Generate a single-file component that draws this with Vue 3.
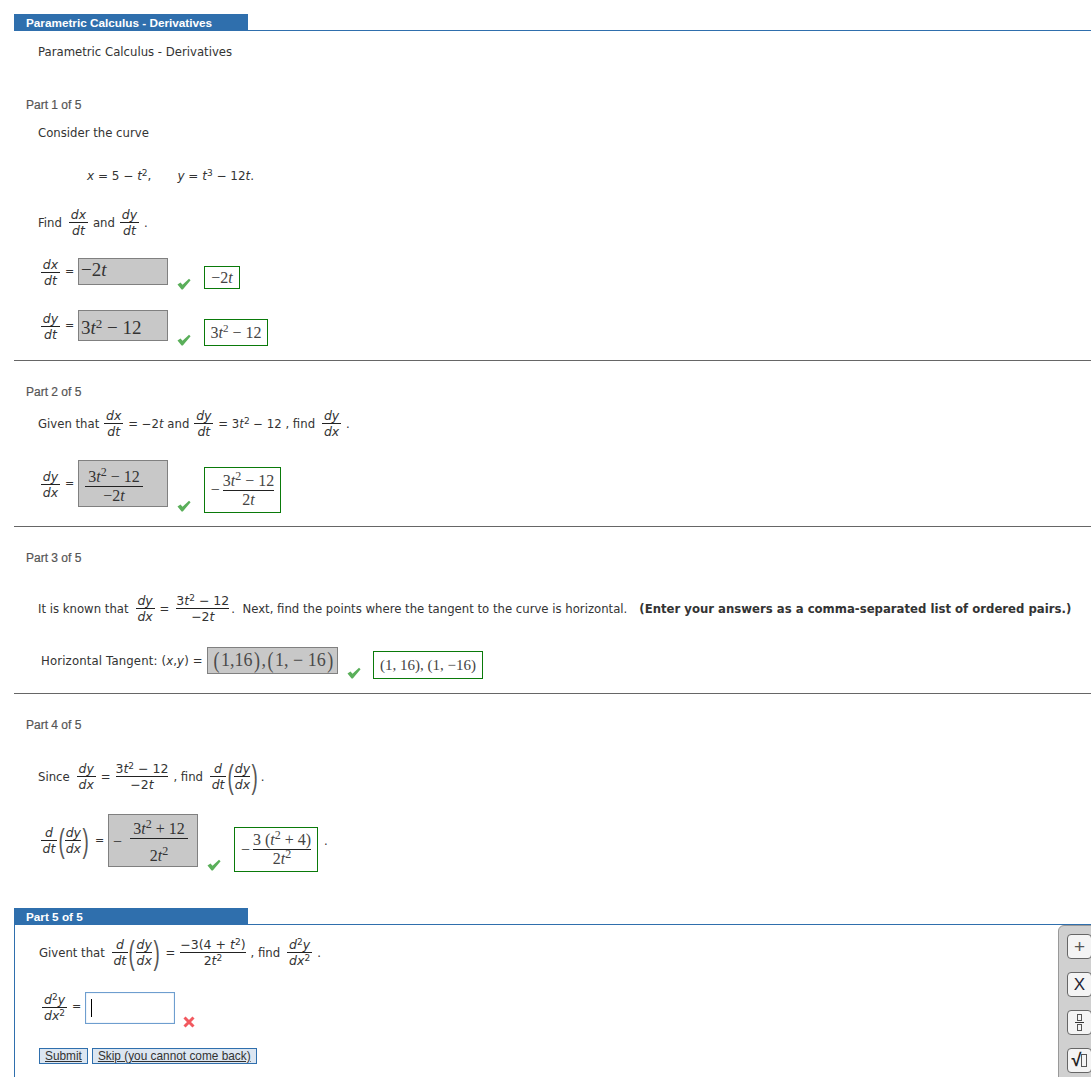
<template>
  <div class="page">
    <div class="banner"><span class="tab">Parametric Calculus - Derivatives</span></div>
    <p class="title">Parametric Calculus - Derivatives</p>

    <!-- part 1 -->
    <h4 class="part part-1">Part 1 of 5</h4>
    <p class="text consider">Consider the curve</p>
    <p class="text equation">
      <i>x</i> = 5 − <i>t</i><sup>2</sup>,<span class="eq-gap"></span><i>y</i> = <i>t</i><sup>3</sup> − 12<i>t</i>.
    </p>
    <div class="text line find-1">
      <span>Find</span>
      <span class="frac gap-before"><i>dx</i><i>dt</i></span>
      <span>and</span>
      <span class="frac"><i>dy</i><i>dt</i></span>
      <span>.</span>
    </div>
    <div class="answer a-1">
      <span class="frac"><i>dx</i><i>dt</i></span>
      <span class="eq">=</span>
      <div class="input math entry-1">−2<i>t</i></div>
      <svg class="mark check" viewBox="0 0 14 12"><path d="M0.5 6.5 L3.5 4.5 L5.5 6.8 L12 0.8 L13.6 2.2 L5.8 11.5 L4.6 11.5 Z" /></svg>
      <div class="solution math sol-1"><span>−2<i>t</i></span></div>
    </div>
    <div class="answer a-2">
      <span class="frac"><i>dy</i><i>dt</i></span>
      <span class="eq">=</span>
      <div class="input math entry-2">3<i>t</i><sup>2</sup> − 12</div>
      <svg class="mark check" viewBox="0 0 14 12"><path d="M0.5 6.5 L3.5 4.5 L5.5 6.8 L12 0.8 L13.6 2.2 L5.8 11.5 L4.6 11.5 Z" /></svg>
      <div class="solution math sol-2"><span>3<i>t</i><sup>2</sup> − 12</span></div>
    </div>
    <hr class="rule rule-1" />

    <!-- part 2 -->
    <h4 class="part">Part 2 of 5</h4>
    <div class="text line given">
      <span>Given that</span>
      <span class="frac"><i>dx</i><i>dt</i></span>
      <span>= −2<i>t</i> and</span>
      <span class="frac"><i>dy</i><i>dt</i></span>
      <span>= 3<i>t</i><sup>2</sup> − 12 , find</span>
      <span class="frac gap-before"><i>dy</i><i>dx</i></span>
      <span>.</span>
    </div>
    <div class="answer a-3">
      <span class="frac"><i>dy</i><i>dx</i></span>
      <span class="eq">=</span>
      <div class="input math entry-3">
        <span class="frac math-frac wide"><span>3<i>t</i><sup>2</sup> − 12</span><span>−2<i>t</i></span></span>
      </div>
      <svg class="mark check" viewBox="0 0 14 12"><path d="M0.5 6.5 L3.5 4.5 L5.5 6.8 L12 0.8 L13.6 2.2 L5.8 11.5 L4.6 11.5 Z" /></svg>
      <div class="solution math sol-3">
        <span class="minus">−</span>
        <span class="frac math-frac"><span>3<i>t</i><sup>2</sup> − 12</span><span>2<i>t</i></span></span>
      </div>
    </div>
    <hr class="rule rule-2" />

    <!-- part 3 -->
    <h4 class="part">Part 3 of 5</h4>
    <div class="text line known">
      <span>It is known that</span>
      <span class="frac gap-before"><i>dy</i><i>dx</i></span>
      <span>=</span>
      <span class="frac gap-before"><span>3<i>t</i><sup>2</sup> − 12</span><span>−2<i>t</i></span></span>
      <span class="tight">.&nbsp;&nbsp;Next, find the points where the tangent to the curve is horizontal.</span>
      <b class="hint">(Enter your answers as a comma-separated list of ordered pairs.)</b>
    </div>
    <div class="answer a-4">
      <span class="text tangent">Horizontal Tangent: (<i>x</i>,<i>y</i>) =</span>
      <div class="input math entry-4"><span class="big-paren">(</span>1,16<span class="big-paren">)</span>,<span class="big-paren">(</span>1, − 16<span class="big-paren">)</span></div>
      <svg class="mark check" viewBox="0 0 14 12"><path d="M0.5 6.5 L3.5 4.5 L5.5 6.8 L12 0.8 L13.6 2.2 L5.8 11.5 L4.6 11.5 Z" /></svg>
      <div class="solution math sol-4"><span>(1, 16), (1, −16)</span></div>
    </div>
    <hr class="rule rule-3" />

    <!-- part 4 -->
    <h4 class="part">Part 4 of 5</h4>
    <div class="text line since">
      <span>Since</span>
      <span class="frac gap-before"><i>dy</i><i>dx</i></span>
      <span>=</span>
      <span class="frac"><span>3<i>t</i><sup>2</sup> − 12</span><span>−2<i>t</i></span></span>
      <span>, find</span>
      <span class="deriv gap-before">
        <span class="frac"><i>d</i><i>dt</i></span><span class="paren">(</span><span class="frac"><i>dy</i><i>dx</i></span><span class="paren">)</span>
      </span>
      <span class="tight">.</span>
    </div>
    <div class="answer a-5">
      <span class="deriv">
        <span class="frac"><i>d</i><i>dt</i></span><span class="paren">(</span><span class="frac"><i>dy</i><i>dx</i></span><span class="paren">)</span>
      </span>
      <span class="eq">=</span>
      <div class="input math entry-5">
        <span class="minus">−</span>
        <span class="frac math-frac wide"><span>3<i>t</i><sup>2</sup> + 12</span><span class="tall">2<i>t</i><sup>2</sup></span></span>
      </div>
      <svg class="mark check" viewBox="0 0 14 12"><path d="M0.5 6.5 L3.5 4.5 L5.5 6.8 L12 0.8 L13.6 2.2 L5.8 11.5 L4.6 11.5 Z" /></svg>
      <div class="solution math sol-5">
        <span class="minus">−</span>
        <span class="frac math-frac wide"><span>3 (<i>t</i><sup>2</sup> + 4)</span><span>2<i>t</i><sup>2</sup></span></span>
      </div>
      <span class="text stop">.</span>
    </div>

    <!-- part 5, the open one -->
    <div class="banner banner-5"><span class="tab">Part 5 of 5</span></div>
    <section class="current">
      <div class="text line givent">
        <span>Givent that</span>
        <span class="deriv gap-before">
          <span class="frac"><i>d</i><i>dt</i></span><span class="paren">(</span><span class="frac"><i>dy</i><i>dx</i></span><span class="paren">)</span>
        </span>
        <span>=</span>
        <span class="frac"><span>−3(4 + <i>t</i><sup>2</sup>)</span><span>2<i>t</i><sup>2</sup></span></span>
        <span>, find</span>
        <span class="frac second gap-before"><span><i>d</i><sup>2</sup><i>y</i></span><span><i>dx</i><sup>2</sup></span></span>
        <span>.</span>
      </div>
      <div class="answer a-6">
        <span class="frac second"><span><i>d</i><sup>2</sup><i>y</i></span><span><i>dx</i><sup>2</sup></span></span>
        <span class="eq">=</span>
        <div class="entry-6"><span class="caret"></span></div>
        <svg class="mark cross" viewBox="0 0 12 12"><path d="M1.5 1.5 L10.5 10.5 M10.5 1.5 L1.5 10.5" /></svg>
      </div>
      <div class="buttons">
        <button class="btn" type="button">Submit</button>
        <button class="btn" type="button">Skip (you cannot come back)</button>
      </div>
    </section>

    <!-- math palette docked over the right edge -->
    <aside class="palette">
      <div class="key key-plus">+</div>
      <div class="key key-x">X</div>
      <div class="key key-frac"><span class="box"></span><span class="bar"></span><span class="box"></span></div>
      <div class="key key-root">√<span class="box"></span></div>
    </aside>
  </div>
</template>

<script setup>
</script>

<style>
html,
body {
  overflow: hidden;
  background: #fff;
}
</style>

<style scoped>
.page {
  position: relative;
  height: 1077px;
  padding: 14px 0 0 14px;
  box-sizing: border-box;
  overflow: hidden;
  color: #333;
  font-family: "DejaVu Sans", sans-serif;
  font-size: 11.7px;
}

.banner {
  height: 16px;
  border-bottom: 1px solid #2f6fad;
}

.tab {
  display: block;
  width: 222px;
  height: 17px;
  padding-left: 12px;
  background: #2f6fad;
  color: #fff;
  font-family: "Liberation Sans", sans-serif;
  font-size: 11.75px;
  font-weight: bold;
  line-height: 18px;
}

.title {
  margin: 13px 0 0 24px;
  line-height: 16px;
}

.part {
  margin: 23px 0 0 12px;
  color: #555;
  font-family: "Liberation Sans", sans-serif;
  font-size: 12px;
  font-weight: normal;
  line-height: 16px;
  -webkit-text-stroke: 0.2px #555;
}

.part-1 {
  margin-top: 37px;
}

.text {
  margin: 0;
  line-height: 16px;
}

.consider {
  margin: 12px 0 0 24px;
}

.equation {
  margin: 27px 0 0 73px;
  font-size: 12px;
}

.eq-gap {
  display: inline-block;
  width: 26px;
}

sup {
  font-size: 9px;
  line-height: 0;
  vertical-align: 4px;
}

.line {
  display: flex;
  align-items: center;
  gap: 5px;
  margin-left: 24px;
  height: 30px;
}

.find-1 {
  margin-top: 24px;
}

.given {
  margin-top: 9px;
}

.known {
  margin-top: 28px;
}

.since {
  margin-top: 29px;
}

.givent {
  margin: 11px 0 0 24px;
  height: 34px;
}

.gap-before {
  margin-left: 2px;
}

.frac {
  display: inline-flex;
  flex-direction: column;
  align-items: center;
  justify-content: center;
  flex: none;
  min-width: 19px;
  font-size: 12.5px;
  line-height: 14px;
  white-space: nowrap;
}

.second {
  min-width: 25px;
}

.frac > :first-child {
  align-self: stretch;
  text-align: center;
  border-bottom: 1px solid #222;
}

.frac > :last-child {
  padding-top: 1px;
}

.tight {
  margin-left: -3px;
}

.hint {
  margin-left: 7px;
}

.deriv {
  display: inline-flex;
  align-items: center;
  gap: 0;
}

.deriv .frac {
  min-width: 16px;
}

.paren {
  font-family: "Liberation Sans", sans-serif;
  font-size: 34px;
  font-weight: normal;
  line-height: 30px;
  transform: scaleX(0.55);
  margin: -3px -1.5px 0;
  color: #555;
}

.answer {
  display: flex;
  align-items: flex-start;
}

.answer > .frac,
.answer > .deriv {
  margin-left: 27px;
}

.eq {
  width: 8px;
  margin-left: 5px;
  font-size: 11px;
  line-height: 16px;
}

.math {
  font-family: "Liberation Serif", serif;
  color: #333;
}

.math sup {
  font-size: 11px;
  vertical-align: 6px;
}

.input {
  box-sizing: border-box;
  margin-left: 5px;
  width: 90px;
  background: #c8c8c8;
  border: 1px solid #808080;
  font-size: 18px;
}

.input sup {
  font-size: 13px;
}

.solution {
  box-sizing: border-box;
  border: 1px solid #0a7a0a;
  font-size: 16px;
  color: #444;
  display: flex;
  align-items: center;
  justify-content: center;
  flex: none;
}

.mark {
  flex: none;
  width: 14px;
  height: 12px;
}

.check path {
  fill: #5aaf5a;
}

.cross {
  width: 12px;
  height: 12px;
}

.cross path {
  stroke: #f2595f;
  stroke-width: 3;
  fill: none;
}

/* answer rows */
.a-1 {
  margin-top: 20px;
}

.a-1 > .eq {
  margin-top: 6px;
}

.entry-1 {
  height: 27px;
  line-height: 21px;
  padding-left: 2px;
  font-size: 19px;
}

.a-1 .check {
  margin: 20px 13px 0 9px;
}

.sol-1 {
  margin-top: 8px;
  width: 36px;
  height: 23px;
}

.a-2 {
  margin-top: 20px;
}

.a-2 > .frac {
  margin-top: 2px;
}

.a-2 > .eq {
  margin-top: 8px;
}

.entry-2 {
  height: 31px;
  line-height: 34px;
  padding-left: 2px;
  font-size: 19px;
}

.a-2 .check {
  margin: 24px 13px 0 9px;
}

.sol-2 {
  margin-top: 9px;
  width: 64px;
  height: 27px;
}

.rule {
  border: none;
  border-top: 1px solid #666;
  margin: 14px 0 0;
}

.rule + .part {
  margin-top: 23px;
}

.a-3 {
  margin-top: 21px;
}

.a-3 > .frac {
  margin-top: 10px;
}

.a-3 > .eq {
  margin-top: 16px;
}

.entry-3 {
  height: 47px;
  padding: 7px 0 0 6px;
  display: flex;
  align-items: flex-start;
  font-size: 16px;
}

.math-frac {
  font-size: 16px;
  line-height: 18px;
}

.math-frac > :last-child {
  padding-top: 0;
}

.math-frac sup {
  font-size: 12px;
}

.wide {
  width: 58px;
}

.tall {
  margin-top: 8px;
}

.minus {
  margin-right: 3px;
}

.a-3 .check {
  margin: 40px 13px 0 9px;
}

.sol-3 {
  margin-top: 7px;
  width: 77px;
  height: 46px;
}

.rule-2 {
  margin-top: 13px;
}

.a-4 {
  margin: 23px 0 0 27px;
}

.tangent {
  width: 166px;
  margin-top: 6px;
  letter-spacing: 0.15px;
}

.entry-4 {
  margin-left: 0;
  width: 131px;
  height: 27px;
  font-size: 18px;
  line-height: 25px;
  padding-left: 4px;
  white-space: nowrap;
  color: #4a4a4a;
}

.big-paren {
  display: inline-block;
  margin: 0 1.5px;
  transform: scaleY(1.3);
}

.a-4 .check {
  margin: 20px 12px 0 9px;
}

.sol-4 {
  margin-top: 4px;
  width: 110px;
  height: 28px;
  font-size: 15px;
}

.rule-3 {
  margin-top: 14px;
}

.a-5 {
  margin-top: 22px;
}

.a-5 > .deriv {
  width: 49px;
  margin-top: 12px;
}

.a-5 > .eq {
  margin-top: 19px;
}

.entry-5 {
  width: 90px;
  height: 53px;
  padding: 3px 0 0 4px;
  display: flex;
  align-items: center;
  font-size: 16px;
  white-space: nowrap;
}

.entry-5 .minus {
  margin-right: 8px;
}

.a-5 .check {
  margin: 45px 13px 0 9px;
}

.sol-5 {
  margin-top: 13px;
  width: 84px;
  height: 45px;
}

.stop {
  margin: 19px 0 0 6px;
}

.banner-5 {
  margin-top: 36px;
}

.current {
  display: flow-root;
  height: 200px;
  border-left: 1px solid #2f6fad;
}

.a-6 {
  margin-top: 22px;
}

.a-6 > .frac {
  margin-left: 27px;
  margin-top: 1px;
}

.a-6 > .eq {
  margin-top: 7px;
}

.entry-6 {
  box-sizing: border-box;
  display: flex;
  align-items: center;
  width: 90px;
  height: 32px;
  margin-left: 5px;
  padding-left: 5px;
  background: #fff;
  border: 1px solid #6e9ecf;
  box-shadow: inset 0 0 1px #6e9ecf;
}

.caret {
  width: 1px;
  height: 18px;
  background: #000;
}

.a-6 .cross {
  margin: 24px 0 0 8px;
}

.buttons {
  display: flex;
  gap: 4px;
  margin: 20px 0 0 24px;
}

.btn {
  height: 16px;
  padding: 0 5px;
  background: #dce6f1;
  border: 1px solid #2f6fad;
  color: #333;
  font-family: "Liberation Sans", sans-serif;
  font-size: 11.85px;
  line-height: 14px;
  text-decoration: underline;
}

.palette {
  position: absolute;
  left: 1058px;
  top: 925px;
  width: 40px;
  height: 160px;
  box-sizing: border-box;
  padding: 8px 0 0 8px;
  background: #d0d0d0;
  border: 1px solid #999;
  border-radius: 6px 0 0 0;
  display: flex;
  flex-direction: column;
  gap: 13px;
}

.key {
  box-sizing: border-box;
  display: flex;
  align-items: center;
  justify-content: center;
  flex: none;
  width: 25px;
  height: 25px;
  background: #f4f4f4;
  border: 1px solid #666;
  border-radius: 4px;
  font-family: "Liberation Sans", sans-serif;
}

.key-plus {
  font-size: 19px;
  font-weight: 300;
  color: #555;
}

.key-x {
  font-size: 17px;
  color: #223;
}

.key-frac {
  flex-direction: column;
  gap: 1px;
}

.key-frac .box {
  width: 3px;
  height: 5px;
  border: 1px solid #555;
}

.key-frac .bar {
  width: 9px;
  height: 1px;
  background: #333;
}

.key-root {
  font-size: 18px;
  font-weight: bold;
  color: #222;
}

.key-root .box {
  width: 4px;
  height: 11px;
  border: 1px solid #555;
}
</style>
